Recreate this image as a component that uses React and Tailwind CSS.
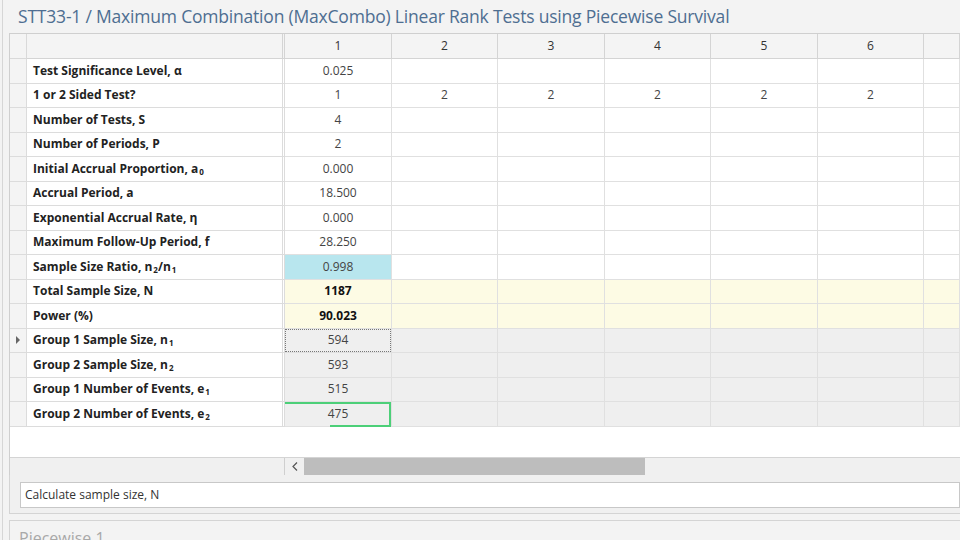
import React from "react";

const font = { fontFamily: '"Open Sans", "Noto Sans", sans-serif' };

const Sub = ({ children }) => (
  <span className="relative top-[3px] text-[8px] ml-[1px]">{children}</span>
);

// label, values for columns 1..6, row kind
const rows = [
  { label: "Test Significance Level, α", vals: ["0.025"] },
  { label: "1 or 2 Sided Test?", vals: ["1", "2", "2", "2", "2", "2"] },
  { label: "Number of Tests, S", vals: ["4"] },
  { label: "Number of Periods, P", vals: ["2"] },
  { label: <>Initial Accrual Proportion, a<Sub>0</Sub></>, vals: ["0.000"] },
  { label: "Accrual Period, a", vals: ["18.500"] },
  { label: "Exponential Accrual Rate, η", vals: ["0.000"] },
  { label: "Maximum Follow-Up Period, f", vals: ["28.250"] },
  { label: <>Sample Size Ratio, n<Sub>2</Sub>/n<Sub>1</Sub></>, vals: ["0.998"], cyan: true },
  { label: "Total Sample Size, N", vals: ["1187"], kind: "result" },
  { label: "Power (%)", vals: ["90.023"], kind: "result" },
  { label: <>Group 1 Sample Size, n<Sub>1</Sub></>, vals: ["594"], kind: "out", current: true },
  { label: <>Group 2 Sample Size, n<Sub>2</Sub></>, vals: ["593"], kind: "out" },
  { label: <>Group 1 Number of Events, e<Sub>1</Sub></>, vals: ["515"], kind: "out" },
  { label: <>Group 2 Number of Events, e<Sub>2</Sub></>, vals: ["475"], kind: "out", editing: true },
];

const cols = "grid grid-cols-[17px_258px_107px_106px_107px_106px_107px_106px_1fr]";

const cellBg = (row) => {
  if (row.kind === "result") return "bg-[#fdfbe4]";
  if (row.kind === "out") return "bg-[#efefef]";
  return "bg-white";
};

export default function App() {
  return (
    <div className="w-[960px] h-[540px] overflow-hidden bg-[#f3f3f3] flex" style={font}>
      {/* window edge */}
      <div className="w-[2px] shrink-0" />
      <div className="w-[1px] shrink-0 bg-[#d6d6d6]" />
      <div className="w-[6px] shrink-0" />

      <div className="flex-1 flex flex-col min-w-0">
        {/* Title */}
        <div className="h-[33px] shrink-0 pl-[9px] flex items-center">
          <h1 className="text-[17.5px] text-[#4e6e91] tracking-[-0.2px] whitespace-nowrap">
            STT33-1 / Maximum Combination (MaxCombo) Linear Rank Tests using Piecewise Survival
          </h1>
        </div>

        {/* Grid panel */}
        <div className="border-l border-t border-[#cfcfcf] bg-white shrink-0">
          {/* header */}
          <div className={`${cols} h-[25px] bg-[#f4f4f4] text-[12px] text-[#333]`}>
            <div className="border-r border-b border-[#d9d9d9]" />
            <div className="border-r-[3px] border-double border-b border-[#d4d4d4]" />
            {["1", "2", "3", "4", "5", "6", ""].map((h, i) => (
              <div
                key={i}
                className="border-r border-b border-[#d4d4d4] flex items-center justify-center"
              >
                {h}
              </div>
            ))}
          </div>

          {rows.map((row, r) => (
            <div key={r} className={`${cols} h-[24.5px] text-[12px]`}>
              <div className="bg-[#f4f4f4] border-r border-b border-[#dcdcdc] flex items-center justify-center">
                {row.current && (
                  <span className="w-0 h-0 border-y-[4px] border-y-transparent border-l-[4px] border-l-[#666]" />
                )}
              </div>
              <div className="bg-white border-r-[3px] border-double border-b border-[#dcdcdc] flex items-center pl-[6px] font-bold text-[#222] whitespace-nowrap">
                {row.label}
              </div>
              {Array.from({ length: 7 }).map((_, c) => {
                const v = row.vals[c] || "";
                let bg = cellBg(row);
                if (row.cyan && c === 0) bg = "bg-[#b8e6ee]";
                const first = c === 0;
                return (
                  <div
                    key={c}
                    className={`relative ${bg} border-r border-b border-[#e0e0e0] flex items-center justify-center ${
                      row.kind === "result" ? "font-bold text-[#111]" : "text-[#444]"
                    }`}
                  >
                    {first && row.current && (
                      <span className="absolute inset-0 border border-dotted border-[#777]" />
                    )}
                    {first && row.editing && (
                      <>
                        <span className="absolute left-0 right-0 top-0 h-[2px] bg-[#4ccf78]" />
                        <span className="absolute right-0 top-0 bottom-0 w-[2px] bg-[#4ccf78]" />
                        <span className="absolute left-[45px] right-0 bottom-[-1px] h-[2px] bg-[#4ccf78]" />
                      </>
                    )}
                    {v}
                  </div>
                );
              })}
            </div>
          ))}

          <div className="h-[30px] bg-white" />

          {/* horizontal scrollbar */}
          <div className="h-[18px] flex border-t border-[#d4d4d4] bg-[#f0f0f0]">
            <div className="w-[275px] border-r border-[#cfcfcf]" />
            <div className="w-[19px] flex items-center justify-center">
              <svg width="6" height="9" viewBox="0 0 6 9">
                <path d="M5 0.5 L1 4.5 L5 8.5" fill="none" stroke="#555" strokeWidth="1.2" />
              </svg>
            </div>
            <div className="w-[341px] bg-[#bdbdbd]" />
            <div className="flex-1" />
          </div>
        </div>

        {/* command box */}
        <div className="h-[39px] shrink-0 bg-[#f0f0f0] border-l border-b border-[#d4d4d4] pl-[10px] pt-[7px]">
          <div className="h-[26px] bg-white border border-[#c8c8c8] flex items-center pl-[4px] text-[12px] text-[#333]">
            Calculate sample size, N
          </div>
        </div>

        <div className="h-[6px] shrink-0" />

        {/* lower panel */}
        <div className="flex-1 border-l border-t border-[#d4d4d4] bg-[#f3f3f3] pl-[9px] pt-[5px]">
          <span className="text-[16px] text-[#a8a8a8]">Piecewise 1</span>
        </div>
      </div>
    </div>
  );
}
